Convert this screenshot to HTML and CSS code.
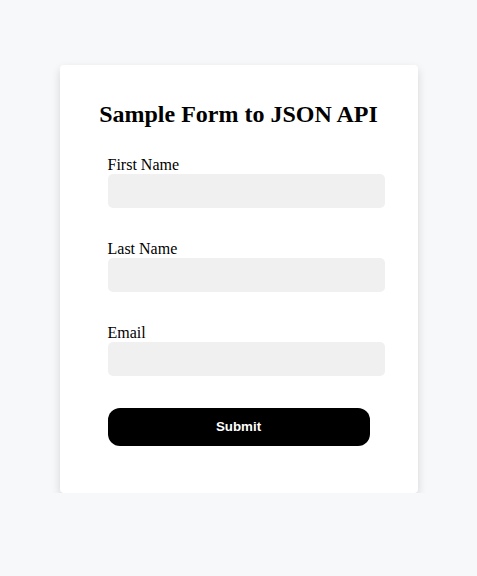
FILE: index.html
```html
<!DOCTYPE html>
<html lang="en">
<head>
<meta charset="utf-8">
<title>Sample Form to JSON API</title>
<link rel="stylesheet" href="styles.css">
</head>
<body>
  <main class="card">
    <h1 class="title">Sample Form to JSON API</h1>
    <form class="form">
      <div class="field">
        <label class="label" for="first">First Name</label>
        <input class="input" id="first" type="text">
      </div>
      <div class="field">
        <label class="label" for="last">Last Name</label>
        <input class="input" id="last" type="text">
      </div>
      <div class="field">
        <label class="label" for="email">Email</label>
        <input class="input" id="email" type="email">
      </div>
      <button class="submit" type="submit">Submit</button>
    </form>
  </main>
</body>
</html>
```

FILE: styles.css
```css
html, body {
  margin: 0;
  padding: 0;
}

body {
  background: #f7f8fa;
  font-family: "Liberation Serif", "Times New Roman", serif;
  color: #000;
}

.card {
  box-sizing: border-box;
  width: 358px;
  margin: 65px auto 0;
  padding: 36px 48px 47px;
  background: #fff;
  border-radius: 4px;
  box-shadow: 0 4px 10px rgba(0, 0, 0, 0.14);
}

.title {
  margin: 0 -30px 28px;
  font-size: 24px;
  line-height: 27px;
  font-weight: bold;
  text-align: center;
  white-space: nowrap;
}

.form {
  display: flex;
  flex-direction: column;
}

.field {
  margin-bottom: 32px;
}

.label {
  display: block;
  font-size: 16px;
  line-height: 18px;
}

.input {
  display: block;
  box-sizing: border-box;
  width: calc(100% + 15px);
  height: 34px;
  margin: 0;
  padding: 0 8px;
  border: none;
  border-radius: 5px;
  background: #f0f0f0;
}

.submit {
  display: block;
  width: 100%;
  height: 38px;
  margin: 0;
  border: none;
  border-radius: 12px;
  background: #000;
  color: #fff;
  font-family: "Liberation Sans", Arial, sans-serif;
  font-size: 13.333px;
  font-weight: bold;
  line-height: 36px;
}
```
